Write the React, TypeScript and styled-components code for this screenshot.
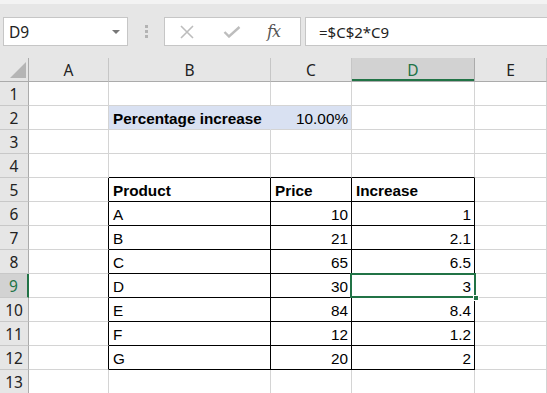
import * as React from 'react';
import styled, { createGlobalStyle } from 'styled-components';

const GlobalStyle = createGlobalStyle`
  html, body {
    margin: 0;
    padding: 0;
    background: #fff;
  }
  * {
    box-sizing: border-box;
  }
`;

const GREEN = '#217346';
const GRID = '#d4d4d4';
const HEAD_BG = '#e6e6e6';
const HEAD_SEL = '#d2d2d2';
const FILL = '#d9e1f2';

const Window = styled.div`
  width: 547px;
  height: 393px;
  overflow: hidden;
  background: ${HEAD_BG};
  font-family: 'Noto Sans', 'Open Sans', sans-serif;
`;

const TopStrip = styled.div`
  height: 4px;
  background: #f3f3f3;
`;

const FormulaBar = styled.div`
  height: 54px;
  display: flex;
  align-items: flex-start;
  padding: 13px 0 0 3px;
`;

const NameBox = styled.div`
  width: 125px;
  height: 29px;
  background: #fff;
  border: 1px solid #c6c6c6;
  display: flex;
  align-items: center;
  justify-content: space-between;
  padding: 0 7px 0 5px;
  font-size: 15.5px;
  color: #222;
`;

const DropArrow = styled.span`
  width: 0;
  height: 0;
  border-left: 4px solid transparent;
  border-right: 4px solid transparent;
  border-top: 4px solid #777;
`;

const Grip = styled.div`
  width: 3px;
  margin: 8px 16px 0 17px;
  display: flex;
  flex-direction: column;
  gap: 2px;
`;

const GripDot = styled.span`
  width: 3px;
  height: 3px;
  background: #b3b3b3;
`;

const FxButtons = styled.div`
  width: 137px;
  height: 29px;
  background: #fff;
  border: 1px solid #c6c6c6;
  display: flex;
  align-items: center;
  padding-left: 14px;
`;

const IconSlot = styled.span<{ $w: number }>`
  width: ${(p) => p.$w}px;
  display: flex;
  align-items: center;
`;

const FxLabel = styled.span`
  font-family: 'DejaVu Serif', 'Liberation Serif', serif;
  font-style: italic;
  font-size: 16px;
  color: #555;
  letter-spacing: -1px;
`;

const FormulaInput = styled.div`
  flex: 1;
  height: 29px;
  margin-left: 4px;
  margin-right: -3px;
  background: #fff;
  border: 1px solid #c6c6c6;
  display: flex;
  align-items: center;
  padding-left: 13px;
  font-size: 15px;
  color: #222;
`;

const Sheet = styled.div`
  display: grid;
  grid-template-columns: 29px 80px 162px 81px 123px 72px;
  grid-auto-rows: 24px;
  background: #fff;
`;

const Corner = styled.div`
  background: ${HEAD_BG};
  border-right: 1px solid #ababab;
  border-bottom: 1px solid #ababab;
  display: flex;
  align-items: flex-end;
  justify-content: flex-end;
  padding: 0 2px 3px 0;
`;

const ColHead = styled.div<{ $sel?: boolean }>`
  background: ${(p) => (p.$sel ? HEAD_SEL : HEAD_BG)};
  color: ${(p) => (p.$sel ? GREEN : '#222')};
  border-right: 1px solid ${(p) => (p.$sel ? '#ababab' : '#c6c6c6')};
  border-bottom: 1px solid #ababab;
  box-shadow: ${(p) => (p.$sel ? `inset 0 -2px 0 ${GREEN}` : 'none')};
  display: flex;
  align-items: center;
  justify-content: center;
  padding-top: 1px;
  font-size: 15.5px;
`;

const RowHead = styled.div<{ $sel?: boolean }>`
  background: ${(p) => (p.$sel ? HEAD_SEL : HEAD_BG)};
  color: ${(p) => (p.$sel ? GREEN : '#222')};
  border-right: ${(p) => (p.$sel ? `2px solid ${GREEN}` : '1px solid #ababab')};
  border-bottom: 1px solid #c8c8c8;
  display: flex;
  align-items: center;
  justify-content: center;
  padding-top: 1px;
  font-size: 15.5px;
`;

const DataCell = styled.div<{
  $right?: boolean;
  $bold?: boolean;
  $fill?: boolean;
  $rb?: string;
  $bb?: string;
}>`
  position: relative;
  background: ${(p) => (p.$fill ? FILL : '#fff')};
  border-right: 1px solid ${(p) => p.$rb ?? GRID};
  border-bottom: 1px solid ${(p) => p.$bb ?? GRID};
  display: flex;
  align-items: center;
  justify-content: ${(p) => (p.$right ? 'flex-end' : 'flex-start')};
  padding: 2px 3px 0 4px;
  font-family: 'Liberation Sans', Arial, sans-serif;
  font-size: 15.3px;
  font-weight: ${(p) => (p.$bold ? 700 : 400)};
  color: #000;
  white-space: nowrap;
`;

const Selection = styled.div`
  position: absolute;
  top: -1px;
  left: -2px;
  right: -2px;
  bottom: -1px;
  border: 2px solid ${GREEN};
  pointer-events: none;
  z-index: 2;
`;

const Handle = styled.span`
  position: absolute;
  right: -5px;
  bottom: -5px;
  width: 6px;
  height: 6px;
  background: ${GREEN};
  border: 1px solid #fff;
`;

type Cell = { v: string; bold?: boolean; right?: boolean; fill?: boolean };

const cols = ['A', 'B', 'C', 'D', 'E'];

const prices: [string, string, string][] = [
  ['A', '10', '1'],
  ['B', '21', '2.1'],
  ['C', '65', '6.5'],
  ['D', '30', '3'],
  ['E', '84', '8.4'],
  ['F', '12', '1.2'],
  ['G', '20', '2'],
];

function buildRows(): Cell[][] {
  const rows: Cell[][] = [];
  for (let r = 1; r <= 13; r++) {
    rows.push(cols.map(() => ({ v: '' })));
  }
  rows[1][1] = { v: 'Percentage increase', bold: true, fill: true };
  rows[1][2] = { v: '10.00%', right: true, fill: true };
  rows[4][1] = { v: 'Product', bold: true };
  rows[4][2] = { v: 'Price', bold: true };
  rows[4][3] = { v: 'Increase', bold: true };
  prices.forEach(([p, price, inc], i) => {
    rows[5 + i][1] = { v: p };
    rows[5 + i][2] = { v: price, right: true };
    rows[5 + i][3] = { v: inc, right: true };
  });
  return rows;
}

const inBox = (r: number, c: number) => r >= 5 && r <= 12 && c >= 1 && c <= 3;

const SEL_ROW = 9;
const SEL_COL = 3;

function CornerTriangle() {
  return (
    <svg width="16" height="16" viewBox="0 0 16 16">
      <polygon points="16,0 16,16 0,16" fill="#b5b5b5" />
    </svg>
  );
}

function CancelIcon() {
  return (
    <svg width="16" height="14" viewBox="0 0 16 14">
      <path d="M2 1 L14 13 M14 1 L2 13" stroke="#bdbdbd" strokeWidth="1.6" fill="none" />
    </svg>
  );
}

function CheckIcon() {
  return (
    <svg width="18" height="12" viewBox="0 0 18 12">
      <path d="M1.5 6 L6 10.5 L16.5 1" stroke="#bdbdbd" strokeWidth="2.4" fill="none" />
    </svg>
  );
}

export default function App() {
  const rows = buildRows();
  return (
    <>
      <GlobalStyle />
      <Window>
        <TopStrip />
        <FormulaBar>
          <NameBox>
            D9
            <DropArrow />
          </NameBox>
          <Grip>
            <GripDot />
            <GripDot />
            <GripDot />
          </Grip>
          <FxButtons>
            <IconSlot $w={44}>
              <CancelIcon />
            </IconSlot>
            <IconSlot $w={44}>
              <CheckIcon />
            </IconSlot>
            <FxLabel>fx</FxLabel>
          </FxButtons>
          <FormulaInput>=$C$2*C9</FormulaInput>
        </FormulaBar>
        <Sheet>
          <Corner>
            <CornerTriangle />
          </Corner>
          {cols.map((c, ci) => (
            <ColHead key={c} $sel={ci === SEL_COL}>
              {c}
            </ColHead>
          ))}
          {rows.map((row, ri) => {
            const r = ri + 1;
            return (
              <React.Fragment key={r}>
                <RowHead $sel={r === SEL_ROW}>{r}</RowHead>
                {row.map((cell, ci) => {
                  const rb =
                    inBox(r, ci) || inBox(r, ci + 1)
                      ? '#000'
                      : cell.fill && row[ci + 1]?.fill
                        ? FILL
                        : undefined;
                  const bb = inBox(r, ci) || inBox(r + 1, ci) ? '#000' : undefined;
                  const selected = r === SEL_ROW && ci === SEL_COL;
                  return (
                    <DataCell
                      key={ci}
                      $right={cell.right}
                      $bold={cell.bold}
                      $fill={cell.fill}
                      $rb={rb}
                      $bb={bb}
                    >
                      {cell.v}
                      {selected && (
                        <Selection>
                          <Handle />
                        </Selection>
                      )}
                    </DataCell>
                  );
                })}
              </React.Fragment>
            );
          })}
        </Sheet>
      </Window>
    </>
  );
}
